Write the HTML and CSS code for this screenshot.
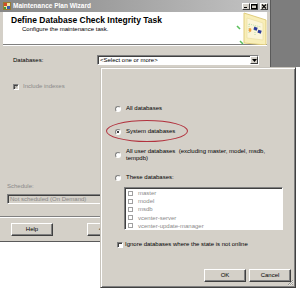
FILE: index.html
```html
<!DOCTYPE html>
<html>
<head>
<meta charset="utf-8">
<link rel="stylesheet" href="styles.css">
</head>
<body>
<div class="screen">
  <div class="top">
    <div class="wizard">
      <div class="titlebar">
        <svg class="appicon" width="8" height="8" viewBox="0 0 8 8">
          <rect x="0.5" y="0.5" width="7" height="7" fill="#f4e4a0" stroke="#9a7a30"/>
          <rect x="1" y="1" width="3" height="3" fill="#d24a2a"/>
          <rect x="4" y="4" width="3" height="3" fill="#3a5aa8"/>
          <rect x="1" y="5" width="2" height="2" fill="#3a9a3a"/>
        </svg>
        <span class="title">Maintenance Plan Wizard</span>
        <div class="tbuttons">
          <span class="tbtn"><svg width="6" height="5" viewBox="0 0 6 5"><rect x="1" y="3" width="3" height="1" fill="#000"/></svg></span>
          <span class="tbtn"><svg width="6" height="5" viewBox="0 0 6 5"><rect x="0.5" y="0.5" width="5" height="4" fill="none" stroke="#000"/><rect x="0" y="0" width="6" height="1.5" fill="#000"/></svg></span>
          <span class="tbtn close"><svg width="6" height="5" viewBox="0 0 6 5"><path d="M1 0.5 L5 4.5 M5 0.5 L1 4.5" stroke="#000" stroke-width="1.1"/></svg></span>
        </div>
      </div>
      <div class="header">
        <div class="htext">
          <div class="htitle">Define Database Check Integrity Task</div>
          <div class="hsub">Configure the maintenance task.</div>
        </div>
        <svg class="hlogo" width="32" height="33" viewBox="0 0 32 33">
          <polygon points="9,1 31,8 31,33 9,31" fill="#f8eeb8" stroke="#e0cd7e" stroke-width="1"/>
          <polygon points="12,6 28,11 28,28 12,26" fill="#fbf5d8" stroke="#e8dca0" stroke-width="0.6"/>
          <path d="M14 12 L26 15 M14 12 L14 22 M20 14 L20 24" stroke="#8cc88c" stroke-width="0.6" stroke-dasharray="1 1"/>
          <ellipse cx="15" cy="18" rx="1.4" ry="2" fill="#f0a040"/>
          <rect x="19" y="15" width="3.5" height="3" fill="#2a3a9a" transform="rotate(18 20 16)"/>
          <rect x="23" y="18" width="3.5" height="3" fill="#2a3a9a" transform="rotate(18 24 19)"/>
          <path d="M2 14 L5 17" stroke="#5cc05c" stroke-width="1.6"/>
          <path d="M5 29 L8 32" stroke="#5cc05c" stroke-width="1.6"/>
        </svg>
      </div>
      <div class="content">
        <div class="row dbrow">
          <span class="lbl">Databases:</span>
          <div class="combo">
            <span class="combotext">&lt;Select one or more&gt;</span>
            <span class="combobtn"><svg width="5" height="3" viewBox="0 0 5 3"><polygon points="0,0 5,0 2.5,3" fill="#000"/></svg></span>
          </div>
        </div>
        <div class="row incrow">
          <span class="chk disabled"><svg width="5" height="5" viewBox="0 0 5 5"><path d="M0.8 2.3 L2 3.6 L4.3 1" stroke="#808080" stroke-width="1" fill="none"/></svg></span>
          <span class="dis">Include indexes</span>
        </div>
        <div class="schedule">
          <div class="dis slbl">Schedule:</div>
          <div class="sbox">Not scheduled (On Demand)</div>
        </div>
        <div class="sep"></div>
        <div class="buttons">
          <span class="btn">Help</span>
          <span class="btn back">&lt; Back</span>
        </div>
      </div>
    </div>
    <div class="backdrop"></div>
  </div>

  <div class="popup">
    <div class="oval"></div>
    <div class="prow r1"><span class="radio"></span><span>All databases</span></div>
    <div class="prow r2"><span class="radio on"></span><span>System databases</span></div>
    <div class="prow r3"><span class="radio"></span><span class="multi">All user databases&nbsp; (excluding master, model, msdb,<br>tempdb)</span></div>
    <div class="prow r4"><span class="radio"></span><span>These databases:</span></div>
    <div class="list">
      <div class="item"><span class="lchk"></span>master</div>
      <div class="item"><span class="lchk"></span>model</div>
      <div class="item"><span class="lchk"></span>msdb</div>
      <div class="item"><span class="lchk"></span>vcenter-server</div>
      <div class="item"><span class="lchk"></span>vcenter-update-manager</div>
    </div>
    <div class="prow ignore"><span class="chk"></span><span>Ignore databases where the state is not online</span></div>
    <div class="pbuttons">
      <span class="btn ok">OK</span>
      <span class="btn cancel">Cancel</span>
    </div>
    <svg class="grip" width="7" height="7" viewBox="0 0 7 7">
      <path d="M6 1 L1 6 M6 3 L3 6 M6 5 L5 6" stroke="#808080" stroke-width="0.8"/>
      <path d="M6.6 1.6 L1.6 6.6 M6.6 3.6 L3.6 6.6" stroke="#fff" stroke-width="0.6"/>
    </svg>
  </div>
</div>
</body>
</html>
```

FILE: styles.css
```css
* { box-sizing: border-box; }
html, body { margin: 0; padding: 0; }
body {
  font-family: "Liberation Sans", Arial, sans-serif;
  font-size: 6px;
  line-height: 7px;
  color: #000;
  background: #fff;
}
.screen {
  position: relative;
  width: 300px;
  height: 288px;
  overflow: hidden;
  background: #fff;
}
.top {
  display: flex;
  align-items: flex-start;
}
.wizard {
  width: 271px;
  height: 242px;
  background: #d4d0c8;
  border-right: 1px solid #5a5a5a;
  border-bottom: 1px solid #5a5a5a;
  display: flex;
  flex-direction: column;
}
.backdrop {
  width: 29px;
  height: 67px;
  background: #7d7d7d;
}
.titlebar {
  height: 12px;
  background: linear-gradient(to right, #868686, #c4c4c4);
  display: flex;
  align-items: center;
  padding-left: 3px;
  padding-right: 2px;
}
.appicon { display: block; }
.title {
  color: #fff;
  font-weight: bold;
  font-size: 6.5px;
  margin-left: 2px;
  line-height: 8px;
}
.tbuttons {
  margin-left: auto;
  display: flex;
}
.tbtn {
  width: 8px;
  height: 7px;
  background: #d4d0c8;
  border: 1px solid;
  border-color: #fff #404040 #404040 #fff;
  display: flex;
  align-items: center;
  justify-content: center;
}
.tbtn svg { display: block; }
.tbtn.close { margin-left: 2px; }
.header {
  margin: 0 3px;
  height: 33px;
  background: #fff;
  display: flex;
  border-bottom: 1px solid #808080;
  box-shadow: 0 1px 0 #fff;
}
.htext {
  padding-left: 8px;
  padding-top: 3px;
}
.htitle {
  font-weight: bold;
  font-size: 8.5px;
  line-height: 10px;
}
.hsub {
  padding-left: 11px;
  line-height: 8px;
}
.hlogo {
  display: block;
  margin-left: auto;
}
.content {
  flex: 1;
  display: flex;
  flex-direction: column;
  padding: 10px 3px 5px 3px;
}
.row {
  display: flex;
  align-items: center;
}
.dbrow { height: 10px; }
.lbl { margin-left: 10px; width: 84px; }
.combo {
  width: 162px;
  height: 10px;
  background: #fff;
  border: 1px solid;
  border-color: #808080 #fff #fff #808080;
  box-shadow: inset 1px 1px #404040;
  display: flex;
  align-items: center;
  padding-left: 2px;
}
.combotext { flex: 1; }
.combobtn {
  width: 8px;
  height: 8px;
  background: #d4d0c8;
  border: 1px solid;
  border-color: #fff #404040 #404040 #fff;
  display: flex;
  align-items: center;
  justify-content: center;
  margin-right: 0;
}
.combobtn svg { display: block; }
.incrow {
  margin-top: 18px;
  height: 7px;
  padding-left: 10px;
}
.chk {
  width: 6px;
  height: 6px;
  background: #fff;
  border: 1px solid;
  border-color: #808080 #fff #fff #808080;
  box-shadow: inset 1px 1px #404040;
  display: flex;
  align-items: center;
  justify-content: center;
  flex: none;
}
.chk svg { display: block; }
.chk.disabled { background: #d4d0c8; }
.incrow .dis { margin-left: 4px; }
.dis { color: #8a8a8a; }
.schedule {
  margin-top: auto;
  padding-left: 4px;
}
.slbl { line-height: 7px; }
.sbox {
  margin-top: 4px;
  height: 10px;
  width: 255px;
  border: 1px solid;
  border-color: #808080 #fff #fff #808080;
  box-shadow: inset 1px 1px #404040;
  color: #8a8a8a;
  padding-left: 2px;
  line-height: 8px;
}
.sep {
  margin-top: 12px;
  height: 2px;
  border-top: 1px solid #808080;
  border-bottom: 1px solid #fff;
  margin-left: -3px;
  margin-right: -3px;
}
.buttons {
  margin-top: 5px;
  display: flex;
  padding-left: 8px;
}
.btn {
  width: 42px;
  height: 13px;
  background: #d4d0c8;
  border: 1px solid;
  border-color: #fff #404040 #404040 #fff;
  box-shadow: inset -1px -1px #808080;
  display: flex;
  align-items: center;
  justify-content: center;
}
.back { margin-left: 34px; }

.popup {
  position: absolute;
  left: 100px;
  top: 67px;
  width: 196px;
  height: 221px;
  background: #d4d0c8;
  border: 1px solid;
  border-color: #c8c4bc #404040 #404040 #c8c4bc;
  box-shadow: inset 1px 1px #fff, inset -1px -1px #808080;
  display: flex;
  flex-direction: column;
  padding-top: 37px;
}
.oval {
  position: absolute;
  left: 5px;
  top: 52px;
  width: 82px;
  height: 22px;
  border: 1.5px solid #b2323e;
  border-radius: 50%;
}
.prow {
  display: flex;
  align-items: center;
  line-height: 7px;
  padding-left: 14px;
}
.radio {
  width: 6px;
  height: 6px;
  border-radius: 50%;
  background: #fff;
  border: 1px solid;
  border-color: #808080 #fff #fff #808080;
  position: relative;
  flex: none;
  margin-right: 5px;
}
.radio.on::after {
  content: "";
  position: absolute;
  left: 1px;
  top: 1px;
  width: 2px;
  height: 2px;
  border-radius: 50%;
  background: #000;
}
.r2 { margin-top: 16px; }
.r3 { margin-top: 13px; }
.multi { line-height: 7px; }
.r4 { margin-top: 12px; }
.list {
  margin-top: 6px;
  margin-left: 23px;
  width: 159px;
  height: 43px;
  background: #fff;
  border: 1px solid;
  border-color: #808080 #fff #fff #808080;
  box-shadow: inset 1px 1px #404040;
  padding-top: 1px;
  padding-left: 3px;
  color: #8a8a8a;
}
.item {
  height: 8.2px;
  line-height: 8px;
  display: flex;
  align-items: center;
}
.lchk {
  width: 5px;
  height: 5px;
  border: 1px solid #a0a0a0;
  background: #fff;
  margin-right: 5px;
  flex: none;
}
.ignore { margin-top: 11px; padding-left: 16px; }
.ignore .chk { margin-right: 2px; }
.pbuttons {
  margin-top: 21px;
  display: flex;
  padding-left: 103px;
}
.cancel { margin-left: 3px; }
.grip {
  position: absolute;
  right: 1px;
  bottom: 1px;
}
```
